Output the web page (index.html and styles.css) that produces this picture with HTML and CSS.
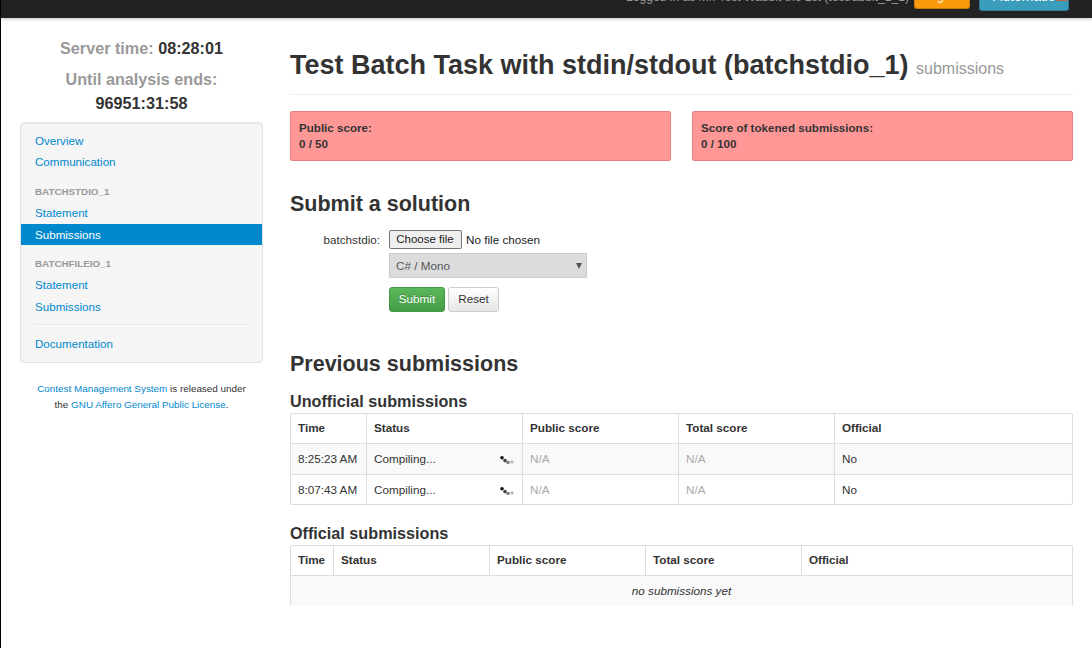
FILE: index.html
```html
<!DOCTYPE html>
<html lang="en">
<head>
<meta charset="utf-8">
<title>Test Batch Task submissions</title>
<link rel="stylesheet" href="styles.css">
</head>
<body>
<header class="navbar">
  <div class="brand">A test contest #1</div>
  <div class="nav-right">
    <span class="logged">Logged in as Mr. Test Wabbit the 1st (testrabbit_1_1)</span>
    <button class="btn-logout">Logout</button>
    <button class="btn-lang">Automatic</button>
  </div>
</header>
<div class="layout">
  <aside class="sidebar">
    <div class="clock">Server time: <b>08:28:01</b></div>
    <div class="clock until">Until analysis ends:</div>
    <div class="clock"><b>96951:31:58</b></div>
    <nav class="well">
      <a class="item first" href="#">Overview</a>
      <a class="item" href="#">Communication</a>
      <div class="nav-head">BATCHSTDIO_1</div>
      <a class="item" href="#">Statement</a>
      <a class="item active" href="#">Submissions</a>
      <div class="nav-head">BATCHFILEIO_1</div>
      <a class="item" href="#">Statement</a>
      <a class="item" href="#">Submissions</a>
      <div class="divider"></div>
      <a class="item" href="#">Documentation</a>
    </nav>
    <p class="credit"><a href="#">Contest Management System</a> is released under the <a href="#">GNU Affero General Public License</a>.</p>
  </aside>
  <main class="content">
    <div class="page-header">
      <h1>Test Batch Task with stdin/stdout (batchstdio_1) <small>submissions</small></h1>
    </div>
    <div class="scores">
      <div class="score-box"><div>Public score:</div><div>0 / 50</div></div>
      <div class="score-box"><div>Score of tokened submissions:</div><div>0 / 100</div></div>
    </div>
    <h2 class="submit-title">Submit a solution</h2>
    <form class="form">
      <label class="form-label">batchstdio:</label>
      <div class="form-fields">
        <div class="file-row"><span class="file-btn">Choose file</span><span class="file-name">No file chosen</span></div>
        <div class="select">C# / Mono<span class="caret"></span></div>
        <div class="actions">
          <span class="btn btn-green">Submit</span>
          <span class="btn btn-plain">Reset</span>
        </div>
      </div>
    </form>
    <h2 class="prev-title">Previous submissions</h2>
    <h3 class="sub-title">Unofficial submissions</h3>
    <table class="table table-a">
      <thead><tr><th class="c-time">Time</th><th class="c-status">Status</th><th class="c-score">Public score</th><th class="c-score">Total score</th><th>Official</th></tr></thead>
      <tbody>
        <tr class="odd"><td>8:25:23 AM</td><td class="status">Compiling...<svg class="spin" width="14" height="9" viewBox="0 0 14 9"><circle cx="2" cy="1.8" r="1.8" fill="#111"/><circle cx="5" cy="4.6" r="1.8" fill="#444"/><circle cx="8" cy="6.4" r="1.7" fill="#777"/><circle cx="12" cy="6" r="1.7" fill="#bbb"/></svg></td><td class="na">N/A</td><td class="na">N/A</td><td>No</td></tr>
        <tr class="last"><td>8:07:43 AM</td><td class="status">Compiling...<svg class="spin" width="14" height="9" viewBox="0 0 14 9"><circle cx="2" cy="1.8" r="1.8" fill="#111"/><circle cx="5" cy="4.6" r="1.8" fill="#444"/><circle cx="8" cy="6.4" r="1.7" fill="#777"/><circle cx="12" cy="6" r="1.7" fill="#bbb"/></svg></td><td class="na">N/A</td><td class="na">N/A</td><td>No</td></tr>
      </tbody>
    </table>
    <h3 class="sub-title second">Official submissions</h3>
    <table class="table table-b">
      <thead><tr><th class="c-time-b">Time</th><th class="c-status">Status</th><th class="c-score">Public score</th><th class="c-score">Total score</th><th>Official</th></tr></thead>
      <tbody><tr class="odd"><td colspan="5" class="empty">no submissions yet</td></tr></tbody>
    </table>
  </main>
</div>
</body>
</html>
```
FILE: styles.css
```css
* { box-sizing: border-box; }
html, body { margin: 0; height: 100%; }
body {
  border-left: 1px solid #000;
  background: #fff;
  color: #333;
  font-family: "Liberation Sans", Arial, sans-serif;
  font-size: 11.7px;
  line-height: 20px;
  overflow: hidden;
}
a { color: #0088cc; text-decoration: none; }
.navbar {
  height: 18px;
  background: #222;
  box-shadow: 0 1px 3px rgba(0,0,0,.25);
  display: flex;
  justify-content: space-between;
  align-items: flex-end;
  overflow: hidden;
  padding: 0 23px 0 19px;
}
.brand {
  color: #999;
  font-size: 18.5px;
  line-height: 20px;
  margin-bottom: 14px;
}
.nav-right { display: flex; align-items: flex-end; }
.logged { color: #999; font-size: 12.1px; line-height: 20px; margin-bottom: 11px; margin-right: 5px; }
.btn-logout, .btn-lang {
  border: 1px solid rgba(0,0,0,.2);
  border-radius: 0 0 3px 3px;
  color: #fff;
  height: 30px;
  padding: 0;
  font-family: "Liberation Sans", Arial, sans-serif;
  line-height: 20px;
}
.btn-logout { width: 56px; font-size: 12px; background: linear-gradient(to top, #fa9a0c 29px, #1a6fd6 29px); margin-right: 9px; margin-bottom: 9px; padding-top: 3px; }
.btn-lang {
  width: 90px;
  font-size: 13.9px;
  background: linear-gradient(#b5674f, #b5674f) right 0 bottom 9px / 12px 2px no-repeat, #3a9dbb;
  margin-bottom: 7px;
  padding-top: 0;
  padding-bottom: 1px;
}
.layout { display: flex; align-items: flex-start; }
.sidebar { width: 262px; margin-left: 19px; flex: none; padding-top: 18px; }
.clock { width: 243px; text-align: center; color: #999; font-size: 16.2px; font-weight: bold; line-height: 24px; }
.clock b { color: #333; }
.clock.until { margin-top: 7px; }
.well {
  margin-top: 7px;
  width: 243px;
  background: #f5f5f5;
  border: 1px solid #e3e3e3;
  border-radius: 4px;
  box-shadow: inset 0 1px 1px rgba(0,0,0,.05);
  padding: 7px 0;
  font-size: 11.6px;
}
.item { display: block; padding: 0 14px; height: 22px; line-height: 21px; }
.item.first { height: 21px; }
.item.active { background: #0088cc; color: #fff; height: 21px; }
.nav-head { padding: 0 14px; margin-top: 8px; height: 21px; color: #999; font-size: 9.8px; font-weight: bold; line-height: 21px; }
.divider { margin: 6px 14px 7px; height: 2px; border-top: 1px solid #e5e5e5; border-bottom: 1px solid #fff; }
.credit { width: 243px; margin: 18px 0 0; padding: 0 10px; text-align: center; font-size: 9.9px; line-height: 16px; }
.content { width: 783px; margin-left: 8px; flex: none; }
.page-header { padding-top: 28px; height: 77px; border-bottom: 1px solid #eee; }
h1 { margin: 0; font-size: 27px; line-height: 38px; font-weight: bold; color: #333; white-space: nowrap; }
h1 small { font-size: 16px; font-weight: normal; color: #999; }
.scores { display: flex; gap: 21px; margin-top: 16px; }
.score-box {
  flex: 1;
  height: 50px;
  background: #ff9797;
  border: 1px solid #ee8080;
  border-radius: 2px;
  padding: 8px;
  font-weight: bold;
  font-size: 11.6px;
  line-height: 16px;
}
h2 { margin: 0; font-size: 21.5px; font-weight: bold; line-height: 28px; color: #333; }
.submit-title { margin-top: 29px; }
.form { display: flex; margin-top: 11px; }
.form-label { width: 90px; text-align: right; line-height: 20px; padding-top: 1px; margin-right: 9px; }
.form-fields { display: flex; flex-direction: column; align-items: flex-start; }
.file-row { display: flex; align-items: center; height: 19px; margin-top: 1px; }
.file-btn {
  font-size: 11.5px;
  line-height: 17px;
  height: 19px;
  width: 73px;
  padding-right: 1px;
  text-align: center;
  background: #efefef;
  border: 1px solid #767676;
  border-radius: 2px;
  color: #222;
}
.file-name { margin-left: 4px; color: #222; }
.select {
  position: relative;
  margin-top: 4px;
  width: 198px;
  height: 25px;
  background: #dcdcdc;
  border: 1px solid #ccc;
  padding-left: 6px;
  line-height: 24px;
  color: #555;
}
.caret {
  position: absolute;
  right: 4px;
  top: 9px;
  width: 0;
  height: 0;
  border-left: 3px solid transparent;
  border-right: 3px solid transparent;
  border-top: 6px solid #555;
}
.actions { display: flex; gap: 3px; margin-top: 9px; }
.btn { display: block; height: 25px; line-height: 22px; border-radius: 3px; border: 1px solid; text-align: center; }
.btn-green { width: 56px; color: #fff; background: linear-gradient(#5bb75b, #449d44); border-color: #419641; text-shadow: 0 -1px 0 rgba(0,0,0,.25); }
.btn-plain { width: 51px; color: #333; background: linear-gradient(#fff, #e6e6e6); border-color: #ccc; }
.prev-title { margin-top: 38px; }
h3.sub-title { margin: 12px 0 0; font-size: 16.2px; font-weight: bold; line-height: 23px; color: #333; }
h3.second { margin-top: 17px; }
.table { width: 783px; border: 1px solid #ddd; border-collapse: separate; border-spacing: 0; table-layout: fixed; border-radius: 2px; }
.table-b { border-bottom: 0; }
th, td { text-align: left; padding: 0 7px; height: 31px; line-height: 20px; border-left: 1px solid #ddd; border-top: 1px solid #ddd; white-space: nowrap; }
th { height: 29px; padding-bottom: 2px; border-top: 0; font-weight: bold; }
th:first-child, td:first-child { border-left: 0; }
.last td { height: 30px; }
.table-a .c-time { width: 75px; }
.table-b .c-time-b { width: 42px; }
.c-status { width: 156px; }
.c-score { width: 156px; }
.odd td { background: #f9f9f9; }
.na { color: #aaa; }
.status { position: relative; }
.spin { position: absolute; right: 8px; top: 12px; }
.empty { text-align: center; font-style: italic; }
```
